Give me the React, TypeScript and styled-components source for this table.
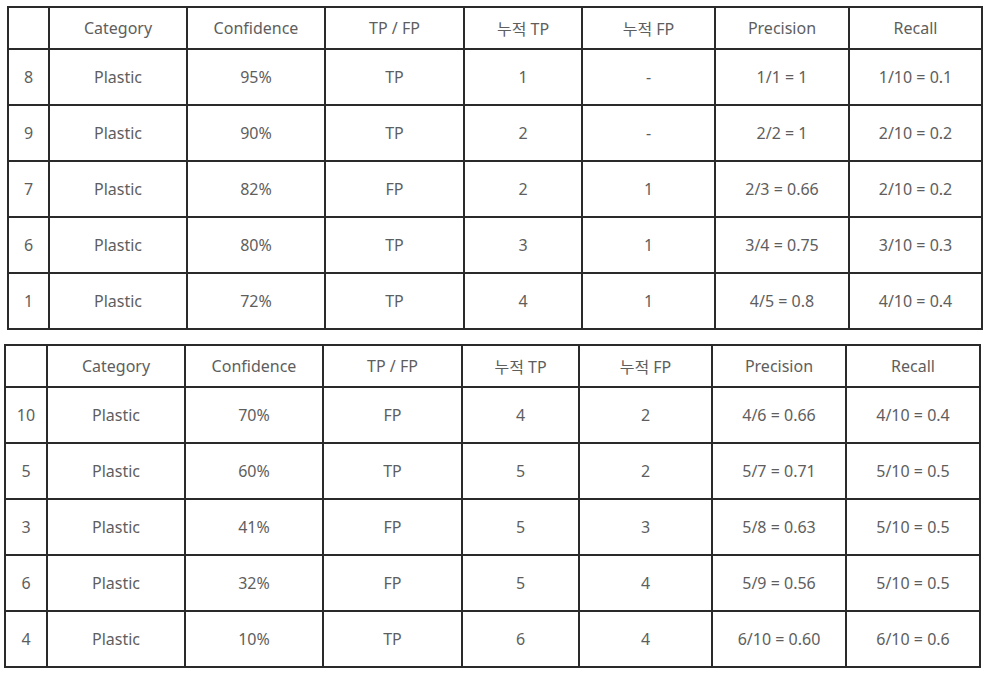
import styled, { createGlobalStyle } from 'styled-components';

const GlobalStyle = createGlobalStyle`
  html, body {
    margin: 0;
    padding: 0;
    background: #ffffff;
  }
`;

const Page = styled.div`
  padding-top: 6px;
  display: flex;
  flex-direction: column;
  gap: 14px;
  font-family: 'Noto Sans', 'Noto Sans CJK KR', sans-serif;
`;

const Table = styled.table<{ $left: number; $width: number }>`
  margin-left: ${(p) => p.$left}px;
  border-collapse: collapse;
  table-layout: fixed;
  width: ${(p) => p.$width}px;
`;

const HeadCell = styled.th`
  border: 2px solid #2a2a2a;
  height: 40px;
  padding: 0;
  font-size: 16px;
  font-weight: 400;
  color: #5e5e5e;
  text-align: center;
  vertical-align: middle;
  white-space: nowrap;
`;

const Cell = styled.td`
  border: 2px solid #2a2a2a;
  height: 54px;
  padding: 0;
  font-size: 16px;
  color: #5e5e5e;
  text-align: center;
  vertical-align: middle;
  white-space: nowrap;
`;

type Row = [string, string, string, string, string, string, string, string];

const headers = ['', 'Category', 'Confidence', 'TP / FP', '누적 TP', '누적 FP', 'Precision', 'Recall'];

const firstRows: Row[] = [
  ['8', 'Plastic', '95%', 'TP', '1', '-', '1/1 = 1', '1/10 = 0.1'],
  ['9', 'Plastic', '90%', 'TP', '2', '-', '2/2 = 1', '2/10 = 0.2'],
  ['7', 'Plastic', '82%', 'FP', '2', '1', '2/3 = 0.66', '2/10 = 0.2'],
  ['6', 'Plastic', '80%', 'TP', '3', '1', '3/4 = 0.75', '3/10 = 0.3'],
  ['1', 'Plastic', '72%', 'TP', '4', '1', '4/5 = 0.8', '4/10 = 0.4'],
];

const secondRows: Row[] = [
  ['10', 'Plastic', '70%', 'FP', '4', '2', '4/6 = 0.66', '4/10 = 0.4'],
  ['5', 'Plastic', '60%', 'TP', '5', '2', '5/7 = 0.71', '5/10 = 0.5'],
  ['3', 'Plastic', '41%', 'FP', '5', '3', '5/8 = 0.63', '5/10 = 0.5'],
  ['6', 'Plastic', '32%', 'FP', '5', '4', '5/9 = 0.56', '5/10 = 0.5'],
  ['4', 'Plastic', '10%', 'TP', '6', '4', '6/10 = 0.60', '6/10 = 0.6'],
];

const ResultTable = ({ rows, widths, left }: { rows: Row[]; widths: number[]; left: number }) => (
  <Table $left={left} $width={widths.reduce((a, b) => a + b, 0)}>
    <colgroup>
      {widths.map((w, i) => (
        <col key={i} style={{ width: w }} />
      ))}
    </colgroup>
    <thead>
      <tr>
        {headers.map((h, i) => (
          <HeadCell key={i}>{h}</HeadCell>
        ))}
      </tr>
    </thead>
    <tbody>
      {rows.map((r, i) => (
        <tr key={i}>
          {r.map((v, j) => (
            <Cell key={j}>{v}</Cell>
          ))}
        </tr>
      ))}
    </tbody>
  </Table>
);

export default function App() {
  return (
    <>
      <GlobalStyle />
      <Page>
        <ResultTable rows={firstRows} left={7} widths={[41, 138, 138, 139, 118, 133, 134, 133]} />
        <ResultTable rows={secondRows} left={4} widths={[42, 138, 138, 139, 117, 133, 134, 134]} />
      </Page>
    </>
  );
}
